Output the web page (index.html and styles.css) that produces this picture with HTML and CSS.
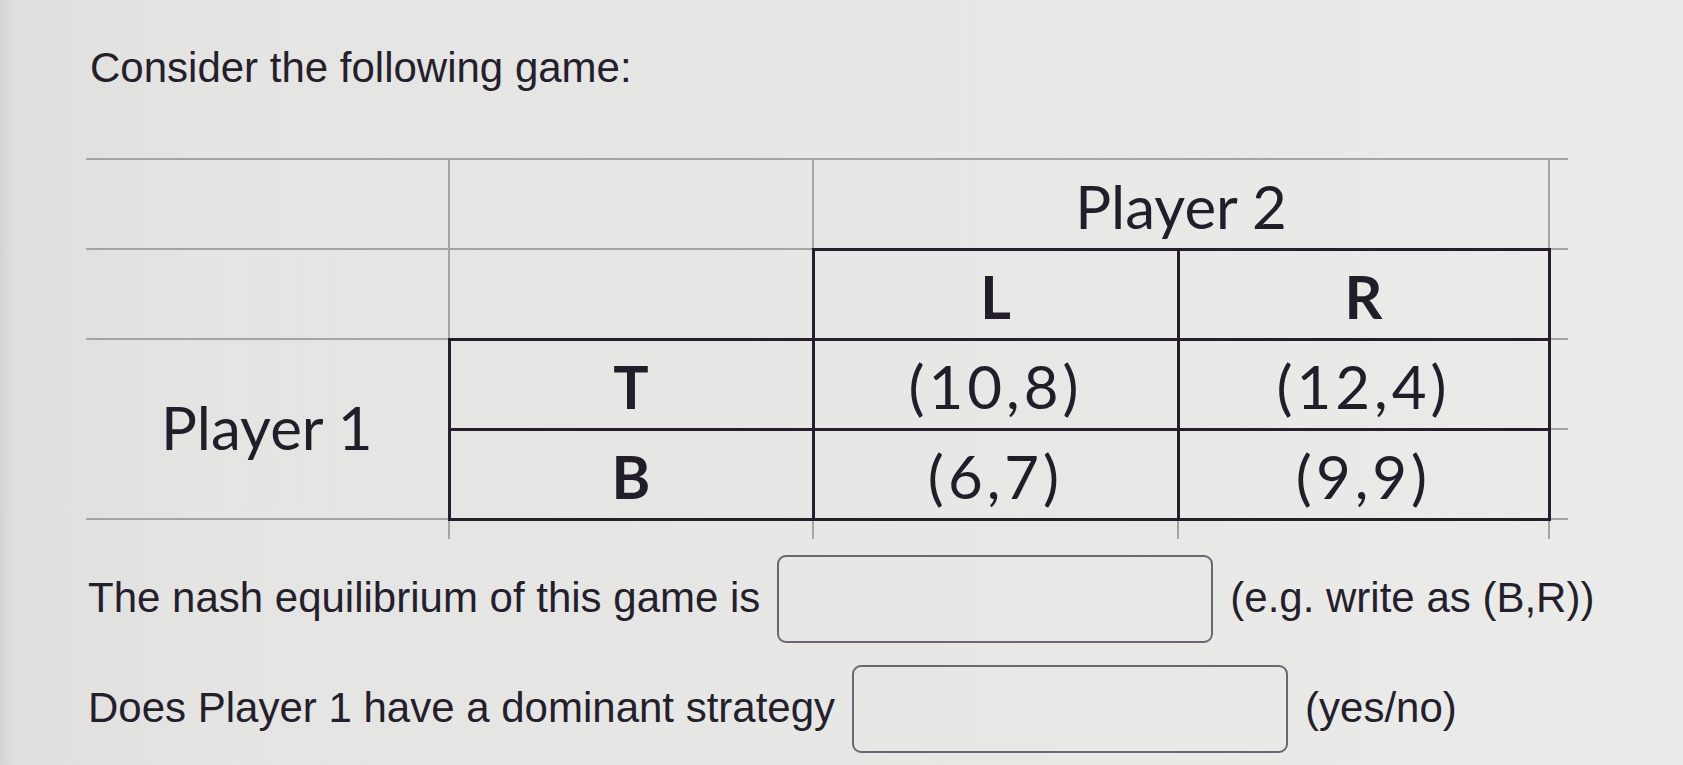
FILE: index.html
```html
<!DOCTYPE html>
<html lang="en">
<head>
<meta charset="utf-8">
<title>Game</title>
<link rel="stylesheet" href="styles.css">
</head>
<body>
<main class="page">
  <p class="title">Consider the following game:</p>
  <table class="game">
    <colgroup>
      <col class="c1"><col class="c2"><col class="c3"><col class="c4"><col class="c5">
    </colgroup>
    <tr>
      <td class="g-top g-bot"></td>
      <td class="g-top g-left g-bot"></td>
      <td colspan="2" class="g-top g-left g-right d-bot head">Player 2</td>
      <td class="g-top g-bot"></td>
    </tr>
    <tr>
      <td class="g-bot"></td>
      <td class="g-left d-bot"></td>
      <td class="d-all strat">L</td>
      <td class="d-all strat">R</td>
      <td class="g-bot"></td>
    </tr>
    <tr>
      <td rowspan="2" class="g-bot player1">Player 1</td>
      <td class="d-all strat">T</td>
      <td class="d-all pay">(10,8)</td>
      <td class="d-all pay">(12,4)</td>
      <td class="g-bot"></td>
    </tr>
    <tr>
      <td class="d-all strat">B</td>
      <td class="d-all pay">(6,7)</td>
      <td class="d-all pay">(9,9)</td>
      <td class="g-bot"></td>
    </tr>
    <tr class="stub">
      <td></td><td class="g-left"></td><td class="g-left"></td><td class="g-left"></td><td class="g-left"></td>
    </tr>
  </table>
  <div class="qa">
    <div class="line">
      <span class="txt">The nash equilibrium of this game is</span>
      <input class="box" type="text" aria-label="nash equilibrium">
      <span class="txt">(e.g. write as (B,R))</span>
    </div>
    <div class="line">
      <span class="txt">Does Player 1 have a dominant strategy</span>
      <input class="box" type="text" aria-label="dominant strategy">
      <span class="txt">(yes/no)</span>
    </div>
  </div>
</main>
</body>
</html>
```
FILE: styles.css
```css
* { box-sizing: border-box; }
html, body { margin: 0; height: 100%; }
body {
  background: linear-gradient(90deg, #d3d3d2 0px, #dfdfde 14px, #e4e4e3 200px, #e7e7e6 900px, #ebebea 1683px);
  color: #241f2b;
  font-family: "Liberation Sans", Arial, sans-serif;
  overflow: hidden;
}
.page { padding: 44px 0 0 86px; }
.title { margin: 0 0 0 4px; font-size: 42px; line-height: 48px; }

.game {
  border-collapse: collapse;
  table-layout: fixed;
  width: 1482px;
  margin-top: 66px;
  font-family: Lato, "Noto Sans", sans-serif;
  font-size: 60px;
  color: #221e29;
}
.c1 { width: 363px; }
.c2 { width: 364px; }
.c3 { width: 365px; }
.c4 { width: 371px; }
.c5 { width: 19px; }
.game td {
  height: 90px;
  padding: 4px 0 0;
  text-align: center;
  vertical-align: middle;
  line-height: 1;
}
.game .stub td { height: 20px; padding: 0; }
.g-top { border-top: 2px solid #a4a4a4; }
.g-bot { border-bottom: 2px solid #a4a4a4; }
.g-left { border-left: 2px solid #a4a4a4; }
.g-right { border-right: 2px solid #a4a4a4; }
.d-bot { border-bottom: 3px solid #261e2c; }
.d-all { border: 3px solid #261e2c; }
.strat { font-weight: 700; font-size: 59px; }
.pay { letter-spacing: 4px; }
.game .player1 { padding: 0 0 4px; }

.qa { margin-top: 16px; padding-left: 2px; }
.line { display: flex; align-items: center; gap: 17px; font-size: 42px; height: 88px; }
.line + .line { margin-top: 22px; }
.txt { margin-bottom: 2px; white-space: nowrap; }
.box {
  width: 436px;
  height: 88px;
  border: 2px solid #6d6572;
  border-radius: 9px;
  background: transparent;
  margin: 0;
  padding: 0;
}
```
